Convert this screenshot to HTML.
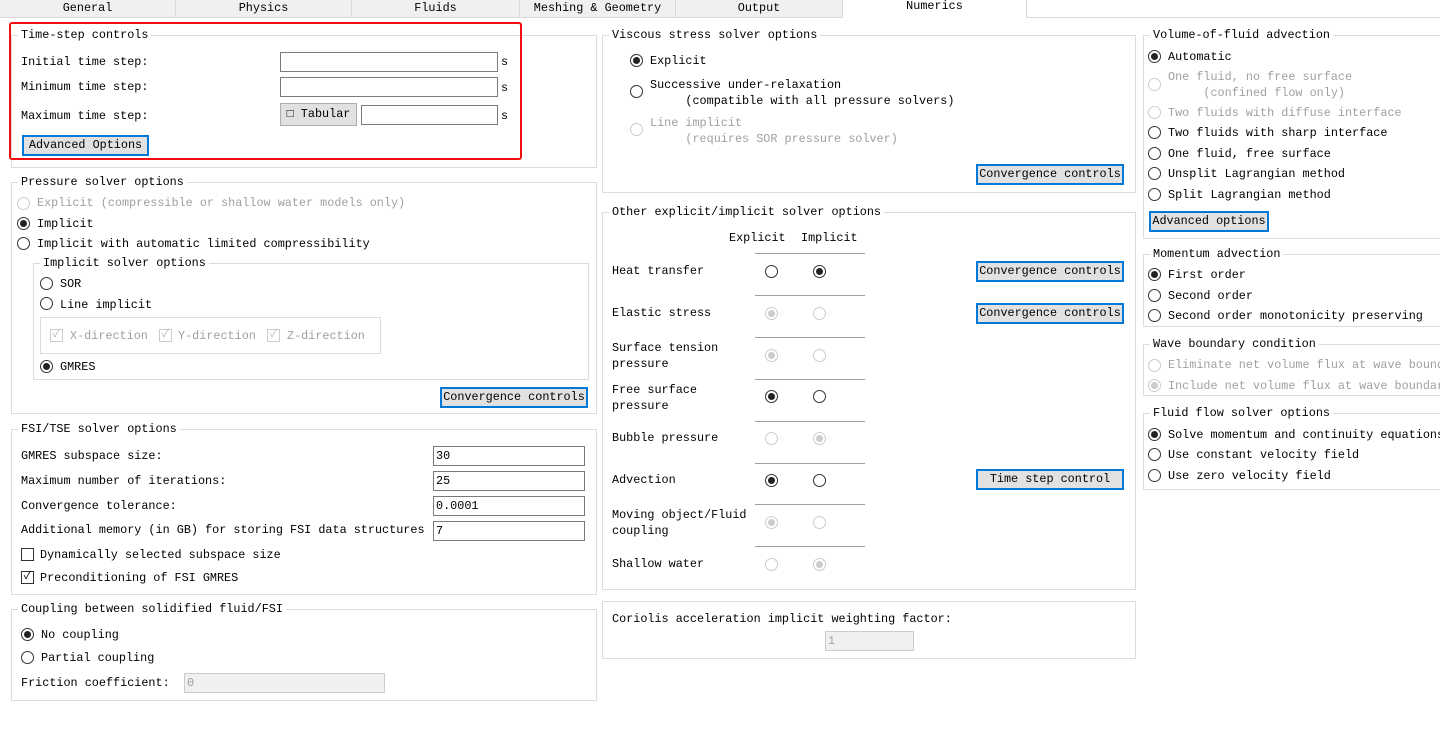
<!DOCTYPE html>
<html><head><meta charset="utf-8"><style>
*{box-sizing:border-box;margin:0;padding:0}
body{width:1440px;height:729px;background:#fff;position:relative;overflow:hidden;font-family:"Liberation Mono","Noto Sans CJK SC",monospace;font-size:11.8px;color:#000}
.tab{position:absolute;top:0;height:18px;background:#f0f0f0;border-right:1px solid #d9d9d9;border-bottom:1px solid #d9d9d9;text-align:center;line-height:17px}
.g{position:absolute;border:1px solid #dcdcdc}
.lg{position:absolute;background:#fff;padding:0 3px;top:-9px;left:6px;line-height:16px;white-space:nowrap}
.t{position:absolute;white-space:nowrap;line-height:16px}
.dis{color:#a0a0a0}
.r{position:absolute;width:13px;height:13px;border:1px solid #333;border-radius:50%;background:#fff}
.r.c::after{content:"";position:absolute;left:2px;top:2px;width:7px;height:7px;border-radius:50%;background:#222}
.r.d{border-color:#ccc}
.r.d.c::after{background:#ccc}
.in{position:absolute;height:20px;border:1px solid #7a7a7a;background:#fff;line-height:18px;padding-left:2px}
.btn{position:absolute;height:21px;border:2px solid #0078d7;background:#e1e1e1;line-height:17px;text-align:center;white-space:nowrap}
.hl{position:absolute;height:1px;background:#a0a0a0;left:755px;width:110px}
.cb{position:absolute;width:13px;height:13px;border:1px solid #333;background:#fff;font-size:11px;line-height:11px;text-align:center}
.cb.d{border-color:#ccc;color:#bbb}
</style></head><body>
<div class="tab" style="left:0;width:176px">General</div>
<div class="tab" style="left:176px;width:176px">Physics</div>
<div class="tab" style="left:352px;width:168px">Fluids</div>
<div class="tab" style="left:520px;width:156px">Meshing &amp; Geometry</div>
<div class="tab" style="left:676px;width:167px">Output</div>
<div class="tab" style="left:843px;width:184px;background:#fff;border-bottom:none;top:-2px;height:20px">Numerics</div>
<div class="tab" style="left:1027px;width:413px;background:#fff;border-right:none"></div>

<!-- Time-step -->
<div class="g" style="left:11px;top:35px;width:586px;height:133px"><div class="lg">Time-step controls</div></div>
<div class="t" style="left:21px;top:54px">Initial time step:</div>
<div class="in" style="left:280px;top:52px;width:218px"></div><div class="t" style="left:501px;top:54px">s</div>
<div class="t" style="left:21px;top:79px">Minimum time step:</div>
<div class="in" style="left:280px;top:77px;width:218px"></div><div class="t" style="left:501px;top:80px">s</div>
<div class="t" style="left:21px;top:108px">Maximum time step:</div>
<div class="btn" style="left:280px;top:103px;width:77px;height:23px;border:1px solid #adadad;line-height:21px">&#9633; Tabular</div>
<div class="in" style="left:361px;top:105px;width:137px"></div><div class="t" style="left:501px;top:108px">s</div>
<div class="btn" style="left:22px;top:135px;width:127px">Advanced Options</div>
<div style="position:absolute;left:9px;top:22px;width:513px;height:138px;border:2px solid #f01010;border-radius:3px"></div>

<!-- Pressure -->
<div class="g" style="left:11px;top:182px;width:586px;height:232px"><div class="lg">Pressure solver options</div></div>
<div class="r d" style="left:17px;top:197px"></div><div class="t dis" style="left:37px;top:195px">Explicit (compressible or shallow water models only)</div>
<div class="r c" style="left:17px;top:217px"></div><div class="t" style="left:37px;top:216px">Implicit</div>
<div class="r" style="left:17px;top:237px"></div><div class="t" style="left:37px;top:236px">Implicit with automatic limited compressibility</div>
<div class="g" style="left:33px;top:263px;width:556px;height:117px"><div class="lg">Implicit solver options</div></div>
<div class="r" style="left:40px;top:277px"></div><div class="t" style="left:60px;top:276px">SOR</div>
<div class="r" style="left:40px;top:297px"></div><div class="t" style="left:60px;top:297px">Line implicit</div>
<div class="g" style="left:40px;top:317px;width:341px;height:37px"></div>
<div class="cb d" style="left:50px;top:329px">&#10003;</div><div class="t dis" style="left:70px;top:328px">X-direction</div>
<div class="cb d" style="left:159px;top:329px">&#10003;</div><div class="t dis" style="left:178px;top:328px">Y-direction</div>
<div class="cb d" style="left:267px;top:329px">&#10003;</div><div class="t dis" style="left:287px;top:328px">Z-direction</div>
<div class="r c" style="left:40px;top:360px"></div><div class="t" style="left:60px;top:359px">GMRES</div>
<div class="btn" style="left:440px;top:387px;width:148px">Convergence controls</div>

<!-- FSI -->
<div class="g" style="left:11px;top:429px;width:586px;height:166px"><div class="lg">FSI/TSE solver options</div></div>
<div class="t" style="left:21px;top:448px">GMRES subspace size:</div><div class="in" style="left:433px;top:446px;width:152px">30</div>
<div class="t" style="left:21px;top:473px">Maximum number of iterations:</div><div class="in" style="left:433px;top:471px;width:152px">25</div>
<div class="t" style="left:21px;top:498px">Convergence tolerance:</div><div class="in" style="left:433px;top:496px;width:152px">0.0001</div>
<div class="t" style="left:21px;top:522px">Additional memory (in GB) for storing FSI data structures</div><div class="in" style="left:433px;top:521px;width:152px">7</div>
<div class="cb" style="left:21px;top:548px"></div><div class="t" style="left:40px;top:547px">Dynamically selected subspace size</div>
<div class="cb" style="left:21px;top:571px">&#10003;</div><div class="t" style="left:40px;top:570px">Preconditioning of FSI GMRES</div>

<!-- Coupling -->
<div class="g" style="left:11px;top:609px;width:586px;height:92px"><div class="lg">Coupling between solidified fluid/FSI</div></div>
<div class="r c" style="left:21px;top:628px"></div><div class="t" style="left:41px;top:627px">No coupling</div>
<div class="r" style="left:21px;top:651px"></div><div class="t" style="left:41px;top:650px">Partial coupling</div>
<div class="t" style="left:21px;top:675px">Friction coefficient:</div>
<div class="in" style="left:184px;top:673px;width:201px;background:#f0f0f0;border-color:#ccc;color:#a0a0a0">0</div>

<!-- Viscous -->
<div class="g" style="left:602px;top:35px;width:534px;height:158px"><div class="lg">Viscous stress solver options</div></div>
<div class="r c" style="left:630px;top:54px"></div><div class="t" style="left:650px;top:53px">Explicit</div>
<div class="r" style="left:630px;top:85px"></div><div class="t" style="left:650px;top:77px">Successive under-relaxation<br>&nbsp;&nbsp;&nbsp;&nbsp;&nbsp;(compatible with all pressure solvers)</div>
<div class="r d" style="left:630px;top:123px"></div><div class="t dis" style="left:650px;top:115px">Line implicit<br>&nbsp;&nbsp;&nbsp;&nbsp;&nbsp;(requires SOR pressure solver)</div>
<div class="btn" style="left:976px;top:164px;width:148px">Convergence controls</div>

<!-- Other -->
<div class="g" style="left:602px;top:212px;width:534px;height:378px"><div class="lg">Other explicit/implicit solver options</div></div>
<div class="t" style="left:729px;top:230px">Explicit</div><div class="t" style="left:801px;top:230px">Implicit</div>
<div class="hl" style="top:253px"></div><div class="hl" style="top:295px"></div><div class="hl" style="top:337px"></div><div class="hl" style="top:379px"></div><div class="hl" style="top:421px"></div><div class="hl" style="top:463px"></div><div class="hl" style="top:504px"></div><div class="hl" style="top:546px"></div>
<div class="t" style="left:612px;top:263px">Heat transfer</div><div class="r" style="left:765px;top:265px"></div><div class="r c" style="left:813px;top:265px"></div>
<div class="btn" style="left:976px;top:261px;width:148px">Convergence controls</div>
<div class="t" style="left:612px;top:305px">Elastic stress</div><div class="r d c" style="left:765px;top:307px"></div><div class="r d" style="left:813px;top:307px"></div>
<div class="btn" style="left:976px;top:303px;width:148px">Convergence controls</div>
<div class="t" style="left:612px;top:340px">Surface tension<br>pressure</div><div class="r d c" style="left:765px;top:349px"></div><div class="r d" style="left:813px;top:349px"></div>
<div class="t" style="left:612px;top:382px">Free surface<br>pressure</div><div class="r c" style="left:765px;top:390px"></div><div class="r" style="left:813px;top:390px"></div>
<div class="t" style="left:612px;top:430px">Bubble pressure</div><div class="r d" style="left:765px;top:432px"></div><div class="r d c" style="left:813px;top:432px"></div>
<div class="t" style="left:612px;top:472px">Advection</div><div class="r c" style="left:765px;top:474px"></div><div class="r" style="left:813px;top:474px"></div>
<div class="btn" style="left:976px;top:469px;width:148px">Time step control</div>
<div class="t" style="left:612px;top:507px">Moving object/Fluid<br>coupling</div><div class="r d c" style="left:765px;top:516px"></div><div class="r d" style="left:813px;top:516px"></div>
<div class="t" style="left:612px;top:556px">Shallow water</div><div class="r d" style="left:765px;top:558px"></div><div class="r d c" style="left:813px;top:558px"></div>

<!-- Coriolis -->
<div class="g" style="left:602px;top:601px;width:534px;height:58px"></div>
<div class="t" style="left:612px;top:611px">Coriolis acceleration implicit weighting factor:</div>
<div class="in" style="left:825px;top:631px;width:89px;background:#f0f0f0;border-color:#ccc;color:#a0a0a0">1</div>

<!-- VOF -->
<div class="g" style="left:1143px;top:35px;width:300px;height:204px"><div class="lg">Volume-of-fluid advection</div></div>
<div class="r c" style="left:1148px;top:50px"></div><div class="t" style="left:1168px;top:49px">Automatic</div>
<div class="r d" style="left:1148px;top:78px"></div><div class="t dis" style="left:1168px;top:69px">One fluid, no free surface<br>&nbsp;&nbsp;&nbsp;&nbsp;&nbsp;(confined flow only)</div>
<div class="r d" style="left:1148px;top:106px"></div><div class="t dis" style="left:1168px;top:105px">Two fluids with diffuse interface</div>
<div class="r" style="left:1148px;top:126px"></div><div class="t" style="left:1168px;top:125px">Two fluids with sharp interface</div>
<div class="r" style="left:1148px;top:147px"></div><div class="t" style="left:1168px;top:146px">One fluid, free surface</div>
<div class="r" style="left:1148px;top:167px"></div><div class="t" style="left:1168px;top:166px">Unsplit Lagrangian method</div>
<div class="r" style="left:1148px;top:188px"></div><div class="t" style="left:1168px;top:187px">Split Lagrangian method</div>
<div class="btn" style="left:1149px;top:211px;width:120px">Advanced options</div>

<!-- Momentum -->
<div class="g" style="left:1143px;top:254px;width:300px;height:73px"><div class="lg">Momentum advection</div></div>
<div class="r c" style="left:1148px;top:268px"></div><div class="t" style="left:1168px;top:267px">First order</div>
<div class="r" style="left:1148px;top:289px"></div><div class="t" style="left:1168px;top:288px">Second order</div>
<div class="r" style="left:1148px;top:309px"></div><div class="t" style="left:1168px;top:308px">Second order monotonicity preserving</div>

<!-- Wave -->
<div class="g" style="left:1143px;top:344px;width:300px;height:52px"><div class="lg">Wave boundary condition</div></div>
<div class="r d" style="left:1148px;top:359px"></div><div class="t dis" style="left:1168px;top:357px">Eliminate net volume flux at wave boundary</div>
<div class="r d c" style="left:1148px;top:379px"></div><div class="t dis" style="left:1168px;top:378px">Include net volume flux at wave boundary</div>

<!-- Fluid flow -->
<div class="g" style="left:1143px;top:413px;width:300px;height:77px"><div class="lg">Fluid flow solver options</div></div>
<div class="r c" style="left:1148px;top:428px"></div><div class="t" style="left:1168px;top:427px">Solve momentum and continuity equations</div>
<div class="r" style="left:1148px;top:448px"></div><div class="t" style="left:1168px;top:447px">Use constant velocity field</div>
<div class="r" style="left:1148px;top:469px"></div><div class="t" style="left:1168px;top:468px">Use zero velocity field</div>
</body></html>
